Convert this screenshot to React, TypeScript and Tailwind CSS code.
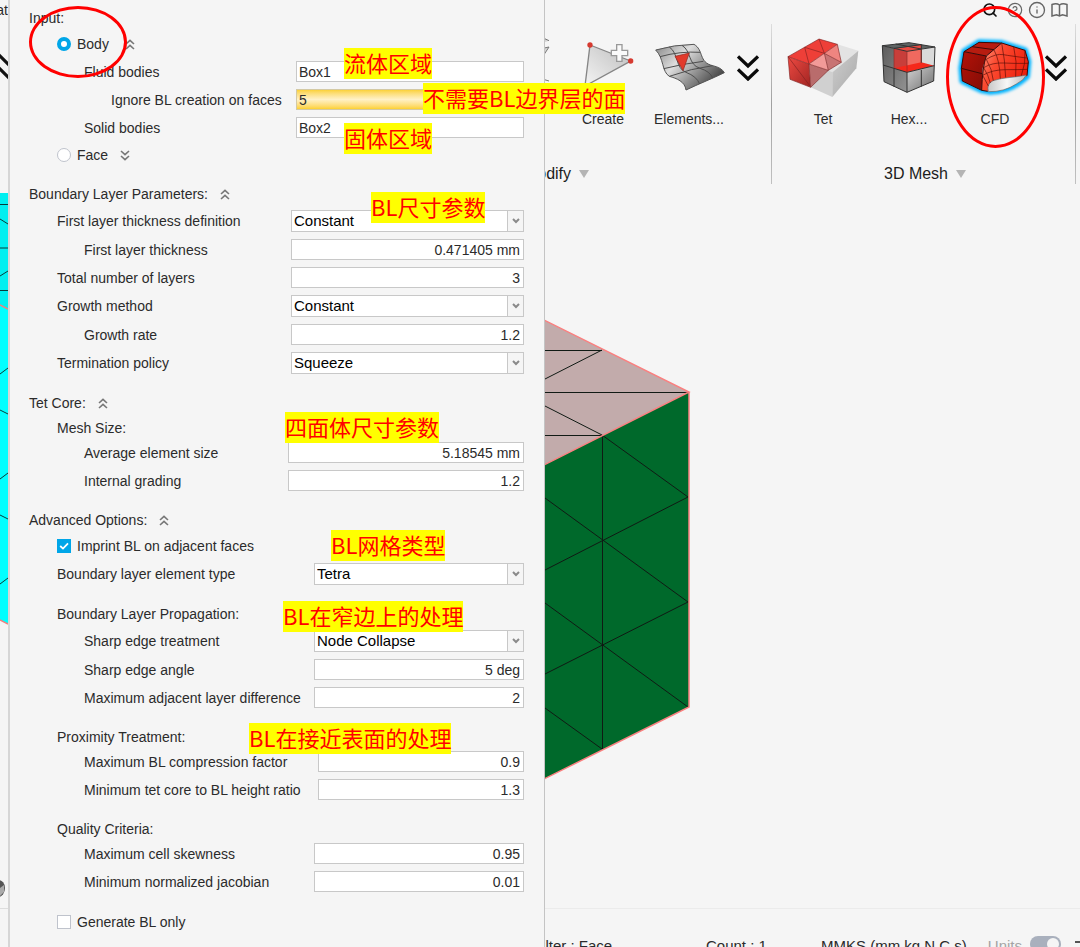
import React, { useId, useState } from 'react';
import { CircleHelp, Info, Search } from 'lucide-react';

type Indent = 1 | 2 | 3;

const INDENT: Record<Indent, string> = {
  1: 'pl-7',
  2: 'pl-[55px]',
  3: 'pl-[82px]',
};

const Caret: React.FC<{ down?: boolean; className?: string }> = ({ down, className = 'ml-3' }) => (
  <button type="button" aria-label={down ? 'Expand' : 'Collapse'} className={`shrink-0 ${className}`}>
    <svg width="10" height="11" viewBox="0 0 10 11" className={down ? 'rotate-180' : ''}>
      <path d="M1 5L5 1.3L9 5M1 10L5 6.3L9 10" fill="none" stroke="#777" strokeWidth="1.6" />
    </svg>
  </button>
);

const Note: React.FC<{ className: string; children: React.ReactNode }> = ({ className, children }) => (
  <span
    className={`absolute z-10 whitespace-nowrap bg-[#ffff00] pb-[2px] font-['Noto_Sans_CJK_SC',sans-serif] text-[22px] leading-[29px] text-[#ff0000] ${className}`}
  >
    {children}
  </span>
);

const Heading: React.FC<{ title: string; sub?: boolean; tight?: boolean }> = ({ title, sub, tight }) => (
  <h2 className={`flex items-center leading-[18px] ${sub ? 'pl-7' : ''} ${tight ? 'mb-[5px]' : 'mb-[7px]'}`}>
    {title}
    {!sub && <Caret />}
  </h2>
);

interface RowProps {
  cols: string;
  indent: Indent;
  label: string;
  value: string;
  kind?: 'number' | 'pick' | 'active' | 'select';
  note?: React.ReactNode;
}

const Row: React.FC<RowProps> = ({ cols, indent, label, value, kind = 'number', note }) => {
  const id = useId();
  return (
    <div className={`relative grid items-center ${cols}`}>
      <label htmlFor={id} className={`whitespace-nowrap leading-5 ${INDENT[indent]}`}>{label}</label>
      {kind === 'select' && (
        <div className="relative">
          <select
            id={id}
            defaultValue={value}
            className="block h-[22px] w-full appearance-none border border-[#c8c8c8] bg-white pl-[2px] text-[15px] leading-5 text-black outline-none"
          >
            <option>{value}</option>
          </select>
          <span className="pointer-events-none absolute inset-y-0 right-0 flex w-[17px] items-center justify-center border border-[#c8c8c8] bg-[#f5f5f5]">
            <svg width="8" height="6" viewBox="0 0 8 6">
              <path d="M1 1L4 4L7 1" fill="none" stroke="#8a8a8a" strokeWidth="2" />
            </svg>
          </span>
        </div>
      )}
      {kind === 'number' && (
        <input id={id} defaultValue={value} className="h-[21px] w-full border border-[#c8c8c8] bg-white px-[3px] text-right outline-none" />
      )}
      {kind === 'pick' && (
        <input id={id} defaultValue={value} className="h-[21px] w-full border border-[#c8c8c8] bg-white px-[2px] outline-none" />
      )}
      {kind === 'active' && (
        <input
          id={id}
          defaultValue={value}
          className="h-[21px] w-full border border-[#d3c9a4] bg-gradient-to-b from-[#fbd235] via-[#fff1c6] to-[#fdd12c] px-[2px] outline-none"
        />
      )}
      {note}
    </div>
  );
};

const Check: React.FC<{ label: string; checked: boolean }> = ({ label, checked }) => {
  const [on, setOn] = useState(checked);
  return (
    <label className="flex h-5 items-center gap-[6px] pl-7">
      <span className="relative flex size-[14px]">
        <input
          type="checkbox"
          checked={on}
          onChange={() => setOn(!on)}
          className="size-[14px] appearance-none border border-[#bfc3cc] bg-white checked:border-[#00a6e8] checked:bg-[#00a6e8]"
        />
        {on && (
          <svg viewBox="0 0 14 14" className="pointer-events-none absolute inset-0">
            <path d="M3.2 7L6 9.6L11 4.4" fill="none" stroke="#fff" strokeWidth="1.8" />
          </svg>
        )}
      </span>
      {label}
    </label>
  );
};

const InputSection = () => {
  const [target, setTarget] = useState('body');
  const cols = 'grid-cols-[267px_1fr]';
  const radio =
    'size-[14px] appearance-none rounded-full border border-[#bfc3cc] bg-white checked:border-4 checked:border-[#00a6e8]';
  return (
    <section>
      <h2 className="mb-[7px] leading-[18px]">Input:</h2>
      <div className="flex flex-col gap-[7px]">
        <div className="relative flex h-5 items-center pl-7">
          <label className="flex items-center gap-[6px]">
            <input type="radio" name="target" checked={target === 'body'} onChange={() => setTarget('body')} className={radio} />
            Body
          </label>
          <Caret className="ml-4" />
          <span className="pointer-events-none absolute left-0 top-[-28px] z-10 h-[72px] w-[98px] rounded-[50%] border-[3px] border-[#ff0000]" />
        </div>
        <Row cols={cols} indent={2} label="Fluid bodies" value="Box1" kind="pick" note={<Note className="left-[315px] top-[-13px]">流体区域</Note>} />
        <Row cols={cols} indent={3} label="Ignore BL creation on faces" value="5" kind="active" note={<Note className="left-[394px] top-[-6px]">不需要BL边界层的面</Note>} />
        <Row cols={cols} indent={2} label="Solid bodies" value="Box2" kind="pick" note={<Note className="left-[315px] top-[6px]">固体区域</Note>} />
        <div className="flex h-5 items-center pl-7">
          <label className="flex items-center gap-[6px]">
            <input type="radio" name="target" checked={target === 'face'} onChange={() => setTarget('face')} className={radio} />
            Face
          </label>
          <Caret down />
        </div>
      </div>
    </section>
  );
};

const LayerSection = () => {
  const cols = 'grid-cols-[262px_1fr]';
  return (
    <section>
      <Heading title="Boundary Layer Parameters:" />
      <div className="flex flex-col gap-[7px]">
        <Row cols={cols} indent={1} label="First layer thickness definition" value="Constant" kind="select" note={<Note className="left-[342px] top-[-18px]">BL尺寸参数</Note>} />
        <Row cols={cols} indent={2} label="First layer thickness" value="0.471405 mm" />
        <Row cols={cols} indent={1} label="Total number of layers" value="3" />
        <Row cols={cols} indent={1} label="Growth method" value="Constant" kind="select" />
        <Row cols={cols} indent={2} label="Growth rate" value="1.2" />
        <Row cols={cols} indent={1} label="Termination policy" value="Squeeze" kind="select" />
      </div>
    </section>
  );
};

const TetSection = () => {
  const cols = 'grid-cols-[259px_1fr]';
  return (
    <section>
      <Heading title="Tet Core:" />
      <Heading title="Mesh Size:" sub tight />
      <div className="flex flex-col gap-[7px]">
        <Row cols={cols} indent={2} label="Average element size" value="5.18545 mm" note={<Note className="left-[256px] top-[-30px]">四面体尺寸参数</Note>} />
        <Row cols={cols} indent={2} label="Internal grading" value="1.2" />
      </div>
    </section>
  );
};

const AdvancedSection = () => {
  const cols = 'grid-cols-[285px_1fr]';
  const wide = 'grid-cols-[289px_1fr]';
  return (
    <>
      <section>
        <Heading title="Advanced Options:" />
        <div className="flex flex-col gap-[7px]">
          <Check label="Imprint BL on adjacent faces" checked />
          <Row cols={cols} indent={1} label="Boundary layer element type" value="Tetra" kind="select" note={<Note className="left-[302px] top-[-33px]">BL网格类型</Note>} />
        </div>
      </section>
      <section>
        <Heading title="Boundary Layer Propagation:" sub />
        <div className="flex flex-col gap-[7px]">
          <Row cols={cols} indent={2} label="Sharp edge treatment" value="Node Collapse" kind="select" note={<Note className="left-[254px] top-[-29px]">BL在窄边上的处理</Note>} />
          <Row cols={cols} indent={2} label="Sharp edge angle" value="5 deg" />
          <Row cols={cols} indent={2} label="Maximum adjacent layer difference" value="2" />
        </div>
      </section>
      <section>
        <Heading title="Proximity Treatment:" sub tight />
        <div className="flex flex-col gap-[7px]">
          <Row cols={wide} indent={2} label="Maximum BL compression factor" value="0.9" note={<Note className="left-[220px] top-[-28px]">BL在接近表面的处理</Note>} />
          <Row cols={wide} indent={2} label="Minimum tet core to BL height ratio" value="1.3" />
        </div>
      </section>
      <section>
        <Heading title="Quality Criteria:" sub tight />
        <div className="flex flex-col gap-[7px]">
          <Row cols={cols} indent={2} label="Maximum cell skewness" value="0.95" />
          <Row cols={cols} indent={2} label="Minimum normalized jacobian" value="0.01" />
        </div>
      </section>
      <Check label="Generate BL only" checked={false} />
    </>
  );
};

const OptionsPanel = () => (
  <aside className="relative z-10 flex w-[537px] shrink-0 flex-col gap-5 border-l-2 border-r border-l-[#d6d6d6] border-r-[#c4c4c4] bg-[#f5f5f5] pl-[19px] pr-5 pt-[9px]">
    <InputSection />
    <LayerSection />
    <TetSection />
    <AdvancedSection />
  </aside>
);

// The part of the window that stays visible left of the options panel
const LeftEdge = () => (
  <div className="w-2 shrink-0 overflow-hidden">
    <div className="flex h-5 justify-end leading-5">at</div>
    <svg width="8" height="927" viewBox="0 20 8 927">
      <path d="M-2 54L10 66M-2 67L10 79" stroke="#111" strokeWidth="3.2" fill="none" />
      <path d="M0 193H8V624L0 620Z" fill="#00ffff" />
      <path d="M0 193H8V309L0 305Z" fill="#00eff0" />
      <path
        d="M0 204.500H8M0 219L8 224M0 248H8M0 276L8 271M0 290.500H8M0 374L8 368M0 410L8 414M0 479L8 473M0 515L8 519M0 584L8 578"
        stroke="#043c3c"
        fill="none"
      />
      <path d="M0 305L8 309M0 620L8 624" stroke="#f08080" strokeWidth="1.500" fill="none" />
      <path d="M-8 888A6.500 8 0 0 1 5 888A6.500 9 0 0 1 -8 888Z" fill="#555" />
      <path d="M0 888L4 885V892L0 896Z" fill="#aaa" />
      <path d="M0 908.500H8" stroke="#ddd" />
    </svg>
  </div>
);

const MoreChevrons = () => (
  <button type="button" aria-label="More tools" className="mt-5 flex h-[26px] w-9 shrink-0 justify-center">
    <svg width="22" height="26" viewBox="0 0 22 26">
      <path d="M1 1.500L11 11L21 1.500M1 14.500L11 24L21 14.500" fill="none" stroke="#0a0a0a" strokeWidth="3.300" />
    </svg>
  </button>
);

const Tool: React.FC<{ label?: string; box: string; className: string; children: React.ReactNode }> = ({ label, box, className, children }) => (
  <button type="button" aria-label={label ? undefined : 'Edit'} className={`relative flex shrink-0 flex-col items-center ${className}`}>
    <svg viewBox={box} className="h-16 w-full">{children}</svg>
    <span className="mt-[10px] leading-5">{label}</span>
  </button>
);

const GroupLabel: React.FC<{ title: string }> = ({ title }) => (
  <div className="mt-[35px] flex items-center justify-center gap-2 pl-[3px] text-base leading-5 text-[#1c1c1c]">
    {title}
    <svg width="10" height="8" viewBox="0 0 10 8">
      <path d="M0 0H10L5 8Z" fill="#b4b4b4" />
    </svg>
  </div>
);

const Divider = () => <div className="h-40 w-px shrink-0 bg-gradient-to-b from-[#dddddd] via-[#a0a0a0] to-[#c0c0c0]" />;

const CreateIcon = () => (
  <>
    <defs>
      <linearGradient id="createFill" x1="0" y1="1" x2="1" y2="0">
        <stop offset="0" stopColor="#f4f4f4" />
        <stop offset="1" stopColor="#bdbdbd" />
      </linearGradient>
    </defs>
    <path d="M150 135L272 183L135 258Z" fill="url(#createFill)" stroke="#858585" strokeWidth="4" />
    <circle cx="150" cy="135" r="8" fill="#d63a30" />
    <circle cx="272" cy="183" r="8" fill="#d63a30" />
    <circle cx="135" cy="258" r="8" fill="#d63a30" />
    <path d="M230 134H246V151H263V167H246V184H230V167H214V151H230Z" fill="#fafafa" stroke="#999" strokeWidth="4" />
  </>
);

const ElementsIcon = () => (
  <>
    <defs>
      <linearGradient id="sheet" x1="0" y1="0" x2="1" y2=".6">
        <stop offset="0" stopColor="#858585" />
        <stop offset=".4" stopColor="#dedede" />
        <stop offset=".72" stopColor="#8d8d8d" />
        <stop offset="1" stopColor="#474747" />
      </linearGradient>
    </defs>
    <path
      d="M347 150Q402 134 462 133C492 150 475 187 518 197Q545 203 553 218C510 239 480 250 438 270C435 245 410 235 388 229C365 215 372 174 347 150Z"
      fill="url(#sheet)"
      stroke="#555"
      strokeWidth="3"
    />
    <path
      d="M388 141C416 160 406 205 438 217Q470 229 479 252M426 136C455 154 443 193 480 205Q510 214 518 234M360 170Q420 153 481 157M371 206Q425 192 490 184M388 229Q455 205 518 197"
      fill="none"
      stroke="#4e4e4e"
      strokeWidth="3"
    />
    <path d="M405 169L448 159L429 212Z" fill="#e23a2c" stroke="#8e2620" strokeWidth="2" />
  </>
);

const TetIcon = () => (
  <>
    <defs>
      <linearGradient id="tetGray" x1="0" y1="0" x2="1" y2="1">
        <stop offset="0" stopColor="#cecece" />
        <stop offset="1" stopColor="#a8a8a8" />
      </linearGradient>
      <linearGradient id="tetRed" x1="0" y1="0" x2="1" y2="1">
        <stop offset="0" stopColor="#ee4a42" />
        <stop offset="1" stopColor="#a02422" />
      </linearGradient>
    </defs>
    <path d="M175 133L238 152L160 217L95 190Z" fill="#e3e3e3" />
    <path d="M95 262V205L148 211L160 217V291Z" fill="#d0d0d0" />
    <path d="M238 152L232 205L160 291V217Z" fill="url(#tetGray)" />
    <path d="M27 170L120 117L175 133L136 160L90 192Z" fill="#ee3f38" />
    <path d="M27 170L90 192L95 262L33 238Z" fill="url(#tetRed)" />
    <path d="M90 192L148 211L95 262Z" fill="#b96c6c" />
    <path d="M90 192L136 160L148 211Z" fill="#f29a98" />
    <path d="M136 160L187 187L148 211Z" fill="#c87474" />
    <path d="M136 160L175 133L187 187Z" fill="#ef8580" />
    <path
      d="M27 170L120 117L175 133L187 187L148 211L95 262L33 238ZM27 170L90 192L95 262M27 170L93 258M77 142L136 160M120 117L136 160M77 142L90 192M136 160L90 192L148 211ZM175 133L136 160L187 187"
      fill="none"
      stroke="#7c2020"
      strokeOpacity=".75"
      strokeWidth="2.500"
    />
  </>
);

const HexIcon = () => (
  <>
    <defs>
      <linearGradient id="hexSide" x1="0" y1="0" x2="1" y2="1">
        <stop offset="0" stopColor="#5c5c5c" />
        <stop offset="1" stopColor="#939393" />
      </linearGradient>
      <linearGradient id="hexFront" x1="0" y1="0" x2="1" y2="1">
        <stop offset="0" stopColor="#d4d4d4" />
        <stop offset="1" stopColor="#6c6c6c" />
      </linearGradient>
    </defs>
    <path d="M310 137L390 128L468 141L384 154Z" fill="#5f6464" />
    <path d="M310 137L384 154V277L315 245Z" fill="url(#hexSide)" />
    <path d="M384 217L466 197L464 243L384 277Z" fill="url(#hexFront)" />
    <path d="M384 154L468 141L466 197L384 217Z" fill="#dadada" />
    <path d="M345 147L427 134V188L345 204Z" fill="#e94b42" />
    <path d="M384 154L427 147V188L384 214Z" fill="#f0695f" />
    <path d="M345 147L384 154V217L345 205Z" fill="#c83e3a" />
    <path d="M345 205L427 187L466 197L384 217Z" fill="#f5281b" />
    <path
      d="M310 137L390 128L468 141L464 243L384 277L315 245ZM310 137L384 154L468 141M384 217V277M345 205V260M312 195L384 217L466 197M427 210V260M350 132L427 147M345 145L427 134M427 134V188"
      fill="none"
      stroke="#333"
      strokeWidth="3"
    />
    <path d="M384 154V217M345 147V205M427 147V188" fill="none" stroke="#8c2c28" strokeWidth="2" />
  </>
);

const CfdIcon = () => (
  <>
    <defs>
      <filter id="glow" x="-20%" y="-20%" width="140%" height="140%">
        <feGaussianBlur stdDeviation="4" />
      </filter>
      <linearGradient id="cfdFront" x1="0" y1="0" x2="1" y2=".5">
        <stop offset="0" stopColor="#ff9a82" />
        <stop offset=".4" stopColor="#fb4a30" />
        <stop offset="1" stopColor="#ee1f0c" />
      </linearGradient>
      <linearGradient id="cfdSide" x1="0" y1="0" x2="1" y2="1">
        <stop offset="0" stopColor="#b51208" />
        <stop offset="1" stopColor="#7e0c06" />
      </linearGradient>
      <linearGradient id="cfdHole" x1="0" y1="0" x2="1" y2="0">
        <stop offset="0" stopColor="#c8c8c8" />
        <stop offset=".5" stopColor="#f7f7f7" />
        <stop offset="1" stopColor="#bcbcbc" />
      </linearGradient>
    </defs>
    <path
      d="M555 155L600 127L668 129L738 151L748 185L744 229C715 256 675 276 630 275L608 271L550 243L547 205Z"
      fill="#00b4ff"
      stroke="#00b4ff"
      strokeWidth="18"
      strokeLinejoin="round"
      filter="url(#glow)"
    />
    <path d="M555 155L600 127L668 129L622 168Z" fill="#b71c10" />
    <path d="M555 155L622 168L611 205L608 271L550 243L547 205Z" fill="url(#cfdSide)" />
    <path d="M668 129L738 151L748 185L744 229Q660 232 636 248L626 274L608 271L611 205L622 168Z" fill="url(#cfdFront)" />
    <path d="M628 275Q622 252 642 242C675 231 710 233 742 225Q736 240 712 252Q675 276 628 275Z" fill="url(#cfdHole)" stroke="#666" strokeWidth="2" />
    <path
      d="M555 155L600 127L668 129L738 151L748 185L744 227M555 155L622 168L668 129M555 155L547 205L550 243L608 271L626 274M622 168Q610 200 608 271M547 205L609 221M579 140L645 149"
      fill="none"
      stroke="#3c0805"
      strokeWidth="3"
    />
    <path
      d="M622 178Q650 160 673 164T743 174M614 203Q640 187 675 189T748 190M611 226Q640 209 680 209T747 208M645 150Q662 180 664 236M668 129Q678 180 680 232M704 140Q715 185 710 230M738 151Q741 190 727 227M622 178Q640 208 643 242M614 203Q628 225 634 249M611 226L628 258"
      fill="none"
      stroke="#5a0d08"
      strokeWidth="2"
    />
  </>
);

const Ribbon = () => (
  <header className="overflow-hidden">
    <div className="flex h-5 items-center justify-end gap-[5px] pr-3 text-[#666]">
      <button type="button" aria-label="Search" className="mr-1 text-[#111]"><Search size={16} strokeWidth={2.5} /></button>
      <button type="button" aria-label="Help"><CircleHelp size={16} strokeWidth={1.8} /></button>
      <button type="button" aria-label="About"><Info size={18} strokeWidth={1.8} /></button>
      <button type="button" aria-label="Manual">
        <svg width="17" height="16" viewBox="0 0 17 16">
          <path d="M8.500 3V13.500M8.500 3C6.500 1.500 3.500 1.500 1 2.500V14L5.500 12.800L8.500 14L11.500 12.800L16 14V2.500C13.500 1.500 10.500 1.500 8.500 3Z" fill="none" stroke="#666" strokeWidth="1.500" />
        </svg>
      </button>
    </div>
    <div className="flex justify-end pr-1 pt-1">
      <div className="w-[432px] shrink-0 pt-[11px]">
        <div className="flex justify-end pr-[5px]">
          <Tool box="-192 105 246 192" className="w-[82px]">
            <path d="M-60 150L12 115L27 122M-60 160L27 141L8 170M-50 220L27 243" fill="#d4d4d4" stroke="#777" strokeWidth="3" />
          </Tool>
          <Tool label="Create" box="54 105 270 192" className="w-[90px]"><CreateIcon /></Tool>
          <Tool label="Elements..." box="324 105 246 192" className="w-[82px]"><ElementsIcon /></Tool>
          <MoreChevrons />
        </div>
        <GroupLabel title="Modify" />
      </div>
      <Divider />
      <div className="w-[303px] shrink-0 pt-[11px]">
        <div className="flex pl-2">
          <Tool label="Tet" box="3 105 258 192" className="w-[86px]"><TetIcon /></Tool>
          <Tool label="Hex..." box="261 105 258 192" className="w-[86px]"><HexIcon /></Tool>
          <Tool label="CFD" box="519 105 258 192" className="w-[86px]"><CfdIcon /></Tool>
          <MoreChevrons />
        </div>
        <GroupLabel title="3D Mesh" />
      </div>
      <Divider />
    </div>
    <span className="pointer-events-none absolute right-[35px] top-[6px] h-[142px] w-[99px] rounded-[50%] border-[3px] border-[#ff0000]" />
  </header>
);

const Model = () => (
  <svg width="146" height="462" viewBox="545 319 146 462">
    <path d="M544 320L689 392L544 465Z" fill="#c2abab" />
    <path d="M544 465L689 392V707L544 779Z" fill="#00692b" />
    <path
      d="M545 350.500H602M545 379L602 350M545 392.500H688M545 406L602 435M545 435.500H602M602.500 436V749M602 435L688 497L545 570M545 498L688 602L545 674M545 603L688 707M545 708L602 749"
      fill="none"
      stroke="#101a14"
    />
    <path d="M544 320L689 392L544 465M689 392V707L544 779" fill="none" stroke="#fa8080" strokeWidth="1.500" />
  </svg>
);

const StatusBar = () => {
  const [units, setUnits] = useState(true);
  return (
    <footer className="flex h-[39px] items-start overflow-hidden whitespace-nowrap border-t border-[#ebebeb] pt-[27px] text-[15px] leading-5">
      <span className="-ml-3 w-[173px] shrink-0">Filter : Face</span>
      <span className="w-[115px] shrink-0">Count : 1</span>
      <span className="mr-auto">MMKS (mm kg N C s)</span>
      <span className="mr-2 text-[#a4a4a4]">Units</span>
      <button
        type="button"
        role="switch"
        aria-checked={units}
        aria-label="Units"
        onClick={() => setUnits(!units)}
        className="mr-[14px] flex h-4 w-[31px] shrink-0 justify-end rounded-full bg-[#a9b0bd] p-[2px]"
      >
        <span className="size-3 rounded-full bg-[#f5f5f5]" />
      </button>
      <span className="mt-[5px] h-[2px] w-[5px] shrink-0 bg-[#555]" />
    </footer>
  );
};

export default function App() {
  return (
    <div className="flex min-h-screen overflow-hidden bg-[#f5f5f5] font-['Liberation_Sans',Arial,sans-serif] text-sm text-[#2b2b2b]">
      <LeftEdge />
      <OptionsPanel />
      <main className="relative flex min-w-0 flex-1 flex-col">
        <Ribbon />
        <div className="flex-1 pt-[135px]">
          <Model />
        </div>
        <StatusBar />
      </main>
    </div>
  );
}
